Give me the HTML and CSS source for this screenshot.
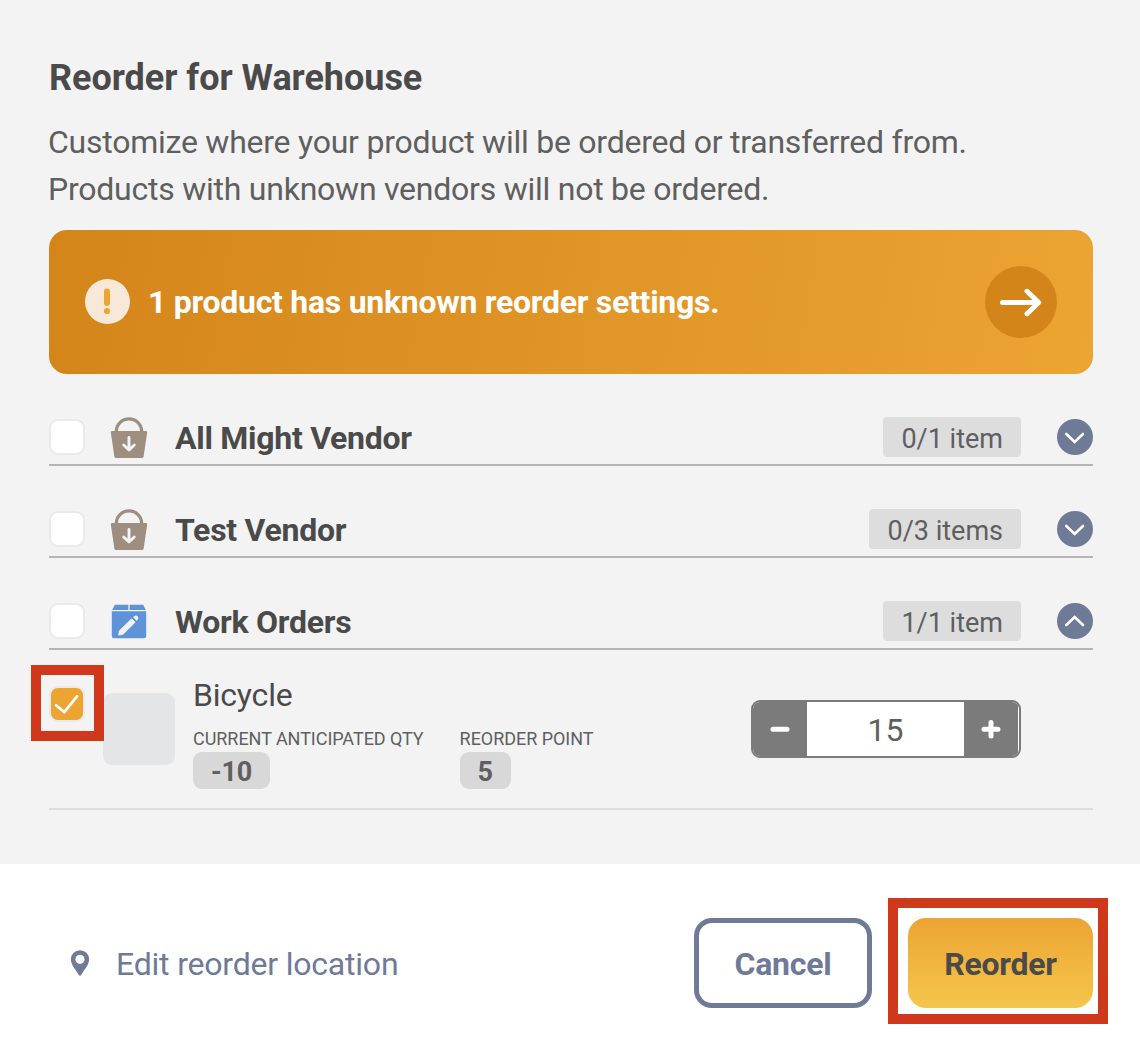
FILE: index.html
```html
<!DOCTYPE html>
<html lang="en">
<head>
    <meta charset="UTF-8">
    <meta name="viewport" content="width=device-width, initial-scale=1.0">
    <title>Reorder for Warehouse</title>
    <link rel="stylesheet" href="styles.css">
</head>
<body>
    <main class="content">
        <h1>Reorder for Warehouse</h1>
        <p class="intro">Customize where your product will be ordered or transferred from.<br>Products with unknown vendors will not be ordered.</p>

        <div class="banner">
            <svg class="banner-icon" viewBox="0 0 46 46">
                <circle cx="23.500" cy="22.500" r="22.5" fill="#f7e8d8"/>
                <rect x="20" y="9.500" width="6" height="17.5" rx="3" fill="#eca433"/>
                <circle cx="23" cy="32" r="3.1" fill="#eca433"/>
            </svg>
            <span class="banner-text">1 product has unknown reorder settings.</span>
            <button class="banner-btn">
                <svg viewBox="0 0 72 72" width="72" height="72">
                    <path d="M17.5 36.5H53M42 25.3L53.7 36.5L42 47.7" fill="none" stroke="#fff" stroke-width="5" stroke-linecap="round" stroke-linejoin="round"/>
                </svg>
            </button>
        </div>

        <div class="group">
            <span class="checkbox"></span>
            <svg class="group-icon" viewBox="0 0 38 42">
                <path d="M6.3 15V14.5a12.7 12.7 0 0 1 25.4 0V15" fill="none" stroke="#9d8e80" stroke-width="3.2"/>
                <path d="M2 14H36a1.3 1.3 0 0 1 1.2 1.6L33.6 39.7a1.7 1.7 0 0 1-1.7 1.4H6.1a1.7 1.7 0 0 1-1.7-1.4L.8 15.6A1.3 1.3 0 0 1 2 14Z" fill="#9d8e80"/>
                <path d="M19 20.5V32.5M13.7 28L19 33L24.3 28" fill="none" stroke="#f3f3f3" stroke-width="2.9" stroke-linecap="round" stroke-linejoin="round"/>
            </svg>
            <h2>All Might Vendor</h2>
            <span class="count">0/1 item</span>
            <button class="toggle">
                <svg viewBox="0 0 36 36" width="36" height="36"><path d="M9.3 15L17.7 23L26 15"/></svg>
            </button>
        </div>

        <div class="group">
            <span class="checkbox"></span>
            <svg class="group-icon" viewBox="0 0 38 42">
                <path d="M6.3 15V14.5a12.7 12.7 0 0 1 25.4 0V15" fill="none" stroke="#9d8e80" stroke-width="3.2"/>
                <path d="M2 14H36a1.3 1.3 0 0 1 1.2 1.6L33.6 39.7a1.7 1.7 0 0 1-1.7 1.4H6.1a1.7 1.7 0 0 1-1.7-1.4L.8 15.6A1.3 1.3 0 0 1 2 14Z" fill="#9d8e80"/>
                <path d="M19 20.5V32.5M13.7 28L19 33L24.3 28" fill="none" stroke="#f3f3f3" stroke-width="2.9" stroke-linecap="round" stroke-linejoin="round"/>
            </svg>
            <h2>Test Vendor</h2>
            <span class="count">0/3 items</span>
            <button class="toggle">
                <svg viewBox="0 0 36 36" width="36" height="36"><path d="M9.3 15L17.7 23L26 15"/></svg>
            </button>
        </div>

        <div class="group">
            <span class="checkbox"></span>
            <svg class="group-icon" viewBox="0 0 38 42">
                <path d="M4.8 3.700H18.300V9H2.2ZM19.600 3.700H33.2L35.8 9H19.600Z" fill="#5e93d8"/>
                <path d="M1.8 10.300H36.2V35a2.3 2.3 0 0 1-2.3 2.3H4.1a2.3 2.3 0 0 1-2.3-2.3Z" fill="#5e93d8"/>
                <path d="M8.6 34.1L9.4 29.7L21.7 17.7L25.2 21.2L13 33.3Z" fill="#f3f3f3" stroke="#f3f3f3" stroke-width=".8" stroke-linejoin="round"/>
                <path d="M23.1 16.3L24.2 15.3a2.4 2.4 0 0 1 3.4 3.4L26.6 19.8Z" fill="#f3f3f3"/>
            </svg>
            <h2>Work Orders</h2>
            <span class="count">1/1 item</span>
            <button class="toggle">
                <svg viewBox="0 0 36 36" width="36" height="36"><path d="M9.3 22L17.7 14L26 22"/></svg>
            </button>
        </div>

        <div class="product">
            <span class="checkbox checked highlight highlight-check">
                <svg viewBox="0 0 36 36" width="36" height="36"><path d="M7 19.3L15.3 26L28 10.3" fill="none" stroke="#fff" stroke-width="2.7" stroke-linecap="round" stroke-linejoin="miter"/></svg>
            </span>
            <div class="thumb"></div>
            <div class="details">
                <div class="name">Bicycle</div>
                <div class="stats">
                    <div class="stat">
                        <span class="label">CURRENT ANTICIPATED QTY</span>
                        <span class="pill">-10</span>
                    </div>
                    <div class="stat">
                        <span class="label">REORDER POINT</span>
                        <span class="pill">5</span>
                    </div>
                </div>
            </div>
            <div class="stepper">
                <button class="step">
                    <svg viewBox="0 0 20 20" width="20" height="20"><path d="M3 10.300H17"/></svg>
                </button>
                <span class="value">15</span>
                <button class="step">
                    <svg viewBox="0 0 20 20" width="20" height="20"><path d="M3 10.300H17M10 3.500V17"/></svg>
                </button>
            </div>
        </div>
    </main>

    <footer class="footer">
        <a class="location">
            <svg viewBox="0 0 20 28" width="20" height="28">
                <path d="M10 1.2a9.1 9.1 0 0 0-9.1 9.1C.9 16.3 6.5 21.5 8.8 26a1.3 1.3 0 0 0 2.4 0C13.5 21.5 19.1 16.3 19.1 10.3A9.1 9.1 0 0 0 10 1.2ZM10 5.7a4.6 4.6 0 1 1 0 9.2a4.6 4.6 0 0 1 0-9.2Z" fill="#6f7a97" fill-rule="evenodd"/>
            </svg>
            <span>Edit reorder location</span>
        </a>
        <button class="btn btn-cancel">Cancel</button>
        <button class="btn btn-reorder highlight highlight-btn">Reorder</button>
    </footer>
</body>
</html>
```
FILE: styles.css
```css
*,
*::after {
    box-sizing: border-box;
}

body {
    margin: 0;
    font-family: Roboto, "Liberation Sans", sans-serif;
    font-size: 32px;
    color: #5f5f5f;
    background: #fff;
}

button {
    font-family: inherit;
    border: none;
    padding: 0;
    cursor: pointer;
}

svg {
    display: block;
    flex-shrink: 0;
}

.content {
    height: 864px;
    padding: 54px 47px 0 49px;
    background: #f3f3f3;
}

h1 {
    margin: 0;
    font-size: 36px;
    line-height: 48px;
    font-weight: 700;
    letter-spacing: -0.03px;
    color: #4a4a4a;
}

.intro {
    margin: 17px 0 17px -1px;
    line-height: 47px;
    letter-spacing: -0.24px;
    white-space: nowrap;
}

/* warning banner */
.banner {
    display: flex;
    align-items: center;
    height: 144px;
    padding: 0 36px 0 35px;
    border-radius: 18px;
    background: linear-gradient(100deg, #d4851a, #eca433);
}

.banner-icon {
    width: 46px;
    height: 46px;
}

.banner-text {
    flex: 1;
    margin-left: 18px;
    font-weight: 700;
    letter-spacing: -0.27px;
    color: #fff;
}

.banner-btn {
    width: 72px;
    height: 72px;
    border-radius: 50%;
    background: #d4851a;
}

/* vendor rows */
.group {
    display: flex;
    align-items: center;
    height: 92px;
    padding-top: 36px;
    border-bottom: 2px solid #b5b5b5;
}

.checkbox {
    width: 36px;
    height: 36px;
    flex-shrink: 0;
    border: 2px solid #eaeaea;
    border-radius: 9px;
    background: #fff;
}

.group-icon {
    width: 38px;
    height: 42px;
    margin: 2px 27px 0 25px;
}

h2 {
    flex: 1;
    margin: 2px 0 0;
    font-size: 32px;
    line-height: 40px;
    font-weight: 700;
    letter-spacing: -0.27px;
    color: #4a4a4a;
}

.count {
    height: 40px;
    margin-right: 36px;
    padding: 0 18px;
    border-radius: 4px;
    background: #ddd;
    font-size: 27px;
    line-height: 45px;
}

.toggle {
    width: 36px;
    height: 36px;
    border-radius: 50%;
    background: #6f7a97;
}

.toggle path {
    fill: none;
    stroke: #fff;
    stroke-width: 2.6;
    stroke-linecap: round;
    stroke-linejoin: miter;
}

/* product row */
.product {
    display: flex;
    align-items: flex-start;
    height: 160px;
    border-bottom: 2px solid #ddd;
}

.product .checkbox {
    margin-top: 36px;
}

.checked {
    background: #eca433;
}

.checked svg {
    margin: -2px;
}

.thumb {
    width: 72px;
    height: 72px;
    margin: 43px 18px 0;
    border-radius: 9px;
    background: #e4e5e7;
}

.details {
    flex: 1;
    padding-top: 25px;
}

.name {
    line-height: 40px;
    letter-spacing: -0.2px;
    color: #4a4a4a;
}

.stats {
    display: flex;
    gap: 36px;
    margin-top: 13px;
}

.stat {
    display: flex;
    flex-direction: column;
    align-items: flex-start;
}

.label {
    font-size: 18px;
    line-height: 22px;
    letter-spacing: -0.04px;
    white-space: nowrap;
}

.pill {
    height: 37px;
    margin-top: 2px;
    padding: 0 18px;
    border-radius: 9px;
    background: #d8d8d8;
    font-size: 27px;
    line-height: 41px;
    font-weight: 700;
    letter-spacing: -0.2px;
}

.stepper {
    display: flex;
    width: 270px;
    height: 58px;
    margin: 50px 72px 0 0;
    border: 2px solid #7b7b7b;
    border-radius: 9px;
    background: #fff;
    overflow: hidden;
}

.step {
    display: flex;
    align-items: center;
    justify-content: center;
    width: 54px;
    background: #7b7b7b;
}

.step path {
    stroke: #fff;
    stroke-width: 5;
    stroke-linecap: round;
}

.value {
    width: 157px;
    line-height: 56px;
    text-align: center;
}

/* footer */
.footer {
    display: flex;
    align-items: center;
    height: 195px;
    padding: 2px 47px 0 70px;
}

.location {
    display: flex;
    flex: 1;
    align-items: center;
    gap: 26px;
    letter-spacing: -0.2px;
    color: #6f7a97;
}

.location span {
    padding-top: 2px;
}

.btn {
    height: 90px;
    padding-top: 2px;
    border-radius: 18px;
    font-size: 32px;
    font-weight: 700;
    letter-spacing: -0.25px;
}

.btn-cancel {
    width: 178px;
    margin-right: 36px;
    border: 5px solid #6f7a97;
    background: #fff;
    color: #6f7a97;
}

.btn-reorder {
    width: 185px;
    background: linear-gradient(#eca433, #f5c64c);
    color: #4a4a4a;
}

/* red frame drawn over the controls to click */
.highlight {
    position: relative;
}

.highlight::after {
    content: "";
    position: absolute;
    border: 10px solid #cf381b;
    pointer-events: none;
}

.highlight-check::after {
    top: -23px;
    left: -20px;
    width: 73px;
    height: 76px;
}

.highlight-btn::after {
    top: -20px;
    left: -20px;
    width: 220px;
    height: 126px;
}
```
